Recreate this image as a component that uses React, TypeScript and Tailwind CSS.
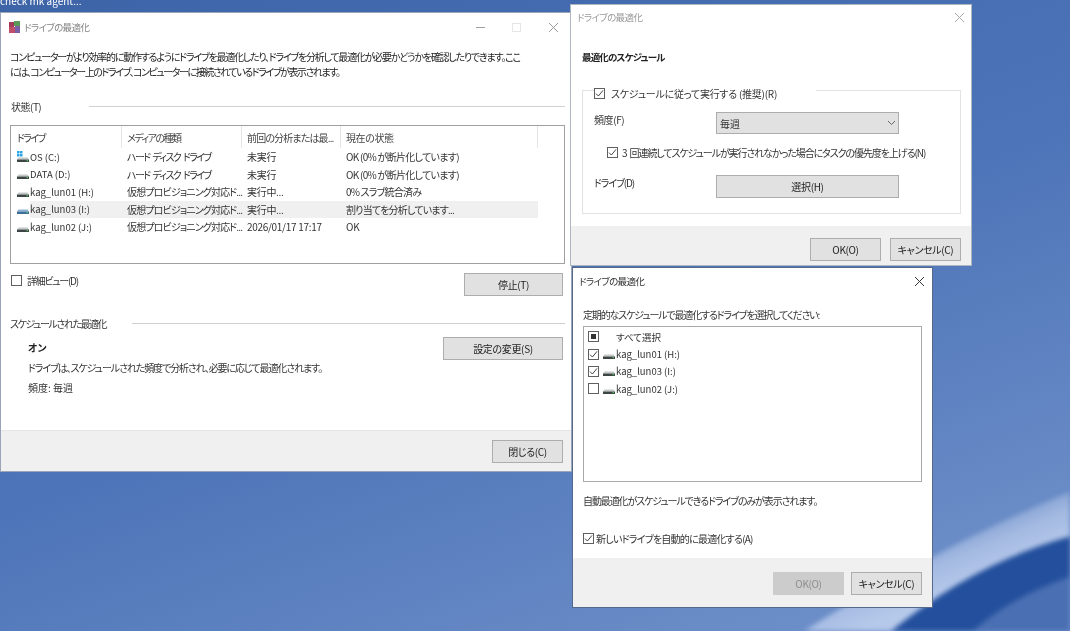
import React from "react";

const Drive = ({ blue = false, flag = false }: { blue?: boolean; flag?: boolean }) => (
  <svg width="14" height="12" viewBox="0 0 14 12" className="shrink-0">
    {flag && (
      <g fill="#2aa5e8">
        <rect x="1" y="0" width="2.5" height="2.5" />
        <rect x="4" y="0" width="2.5" height="2.5" />
        <rect x="1" y="3" width="2.5" height="2.5" />
        <rect x="4" y="3" width="2.5" height="2.5" />
      </g>
    )}
    <path d="M2.5 6.5H11.5L13 8.5H1Z" fill={blue ? "#8db4d8" : "#c4c8c8"} />
    <rect x="1" y="8.5" width="12" height="2.5" fill={blue ? "#3f6f98" : "#3d4444"} />
    <rect x="10.5" y="9.2" width="1.5" height="1" fill="#5cd05c" />
  </svg>
);

const Check = ({ on = false, mixed = false }: { on?: boolean; mixed?: boolean }) => (
  <span className="flex h-[11px] w-[11px] shrink-0 items-center justify-center border border-[#5f5f5f] bg-white">
    {on && (
      <svg width="9" height="9" viewBox="0 0 9 9">
        <path d="M1 4.6L3.4 7L8 1.4" fill="none" stroke="#444" strokeWidth="1" />
      </svg>
    )}
    {mixed && <span className="h-[5px] w-[5px] bg-[#333]" />}
  </span>
);

const Btn = ({ w, children, disabled = false }: { w: string; children: React.ReactNode; disabled?: boolean }) => (
  <div
    className={`flex h-[23px] items-center justify-center whitespace-nowrap border text-[10px] tracking-[-0.35px] ${w} ${
      disabled ? "border-[#cccccc] bg-[#cccccc] text-[#8c8c8c]" : "border-[#adadad] bg-[#e1e1e1] text-[#222]"
    }`}
  >
    {children}
  </div>
);

const Close = ({ color }: { color: string }) => (
  <svg width="11" height="11" viewBox="0 0 11 11">
    <path d="M1 1L10 10M10 1L1 10" stroke={color} strokeWidth="1" fill="none" />
  </svg>
);

const hdd = "ハード ディスク ドライブ";
const thin = "仮想プロビジョニング対応ド...";
const rows = [
  { n: "OS (C:)", m: hdd, mc: "tracking-[-1.6px] [word-spacing:2px]", d: "未実行", s: "OK (0% が断片化しています)", sc: "tracking-[-0.7px]", flag: true },
  { n: "DATA (D:)", m: hdd, mc: "tracking-[-1.6px] [word-spacing:2px]", d: "未実行", s: "OK (0% が断片化しています)", sc: "tracking-[-0.7px]" },
  { n: "kag_lun01 (H:)", m: thin, mc: "tracking-[-0.85px]", d: "実行中...", s: "0% スラブ統合済み", sc: "tracking-[-0.8px]" },
  { n: "kag_lun03 (I:)", m: thin, mc: "tracking-[-0.85px]", d: "実行中...", s: "割り当てを分析しています...", sc: "tracking-[-0.8px]", sel: true },
  { n: "kag_lun02 (J:)", m: thin, mc: "tracking-[-0.85px]", d: "2026/01/17 17:17", s: "OK", sc: "tracking-[-0.2px]" },
];

const MainWindow = () => (
  <div className="absolute left-0 top-[12px] z-10 flex h-[460px] w-[572px] flex-col border border-[#9aa5b8] bg-white">
    <div className="flex h-[27px] shrink-0 items-center pl-[7px] pr-[12px] pt-[1px]">
      <svg width="13" height="13" viewBox="0 0 13 13" className="shrink-0">
        <rect x="1" y="1" width="5" height="5" fill="#a33a5a" />
        <rect x="6" y="0" width="6" height="5" fill="#5a9a58" />
        <rect x="1" y="6" width="6" height="6" fill="#c0506a" />
        <rect x="7" y="5" width="5" height="7" fill="#7a5fa8" />
      </svg>
      <span className="ml-[3px] text-[9.5px] tracking-[-0.6px] text-[#858585]">ドライブの最適化</span>
      <div className="ml-auto flex items-center">
        <div className="h-px w-[9px] bg-[#a0a0a0]" />
        <div className="ml-[27px] h-[9px] w-[9px] border border-[#e6e6e6]" />
        <div className="ml-[27px] flex"><Close color="#9a9a9a" /></div>
      </div>
    </div>
    <div className="mt-[9px] whitespace-nowrap pl-[9px] text-[10px] leading-[15px] text-[#222]">
      <div className="tracking-[-1.23px]">コンピューターがより効率的に動作するようにドライブを最適化したり、ドライブを分析して最適化が必要かどうかを確認したりできます。ここ</div>
      <div className="tracking-[-1.45px]">には、コンピューター上のドライブ、コンピューターに接続されているドライブが表示されます。</div>
    </div>
    <div className="mt-[20px] flex h-[15px] items-center pl-[10px] pr-[6px] text-[10px] tracking-[-0.5px] text-[#333]">
      <span className="w-[78px]">状態(T)</span>
      <div className="h-px flex-1 bg-[#d0d0d0]" />
    </div>
    <div className="ml-[9px] mt-[11px] flex h-[139px] w-[555px] flex-col border border-[#a0a0a0] pr-[26px] text-[10px] text-[#333]">
      <div className="flex h-[22px] shrink-0 items-center whitespace-nowrap text-[#444]">
        <div className="flex h-full w-[111px] items-center border-r border-[#e5e5e5] pl-[6px] tracking-[-1.6px]">ドライブ</div>
        <div className="flex h-full w-[120px] items-center border-r border-[#e5e5e5] pl-[5px] tracking-[-1.5px]">メディアの種類</div>
        <div className="flex h-full w-[99px] items-center border-r border-[#e5e5e5] pl-[5px] tracking-[-0.85px]">前回の分析または最...</div>
        <div className="flex h-full flex-1 items-center border-r border-[#e5e5e5] pl-[5px] tracking-[-0.4px]">現在の状態</div>
      </div>
      <div>
        {rows.map((r) => (
          <div key={r.n} className="flex h-[17.5px] items-center whitespace-nowrap">
            <div className="w-[19px] shrink-0 pl-[5px]">
              <Drive flag={r.flag} blue={r.sel} />
            </div>
            <div className={`flex h-full flex-1 items-center ${r.sel ? "bg-[#f0f0f0]" : ""}`}>
              <div className="w-[92px] text-[9.5px]">{r.n}</div>
              <div className={`w-[120px] pl-[5px] ${r.mc}`}>{r.m}</div>
              <div className="w-[99px] pl-[5px] tracking-[-0.3px]">{r.d}</div>
              <div className={`pl-[5px] ${r.sc}`}>{r.s}</div>
            </div>
          </div>
        ))}
      </div>
    </div>
    <div className="ml-[10px] mr-[8px] mt-[9px] flex items-start justify-between">
      <div className="flex items-center gap-[5px] text-[10px] text-[#333]">
        <Check />
        <span className="tracking-[-1.3px]">詳細ビュー(D)</span>
      </div>
      <Btn w="w-[99px]">停止(T)</Btn>
    </div>
    <div className="mt-[20px] flex h-[15px] items-center pl-[9px] pr-[6px] text-[10px] text-[#333]">
      <span className="w-[122px] tracking-[-1.45px]">スケジュールされた最適化</span>
      <div className="h-px flex-1 bg-[#d0d0d0]" />
    </div>
    <div className="ml-[27px] mr-[8px] mt-[6px] flex justify-between">
      <div className="mt-[1px] whitespace-nowrap text-[10px] text-[#333]">
        <div className="h-[20px] font-bold leading-[20px] text-[#222]">オン</div>
        <div className="h-[20px] leading-[20px] tracking-[-1.1px]">ドライブは、スケジュールされた頻度で分析され、必要に応じて最適化されます。</div>
        <div className="h-[20px] leading-[20px]">頻度: 毎週</div>
      </div>
      <Btn w="w-[120px]">設定の変更(S)</Btn>
    </div>
    <div className="mt-auto flex h-[41px] items-center justify-end border-t border-[#e6e6e6] bg-[#f0f0f0] pr-[8px]">
      <Btn w="w-[71px]">閉じる(C)</Btn>
    </div>
  </div>
);

const ScheduleWindow = () => (
  <div className="absolute left-[570px] top-[4px] z-20 flex h-[262px] w-[402px] flex-col border border-[#aeb6c2] bg-white">
    <div className="flex h-[25px] shrink-0 items-center pl-[6px] pr-[6px] text-[9.5px] tracking-[-0.6px] text-[#9a9a9a]">
      <span>ドライブの最適化</span>
      <span className="ml-auto flex"><Close color="#a8a8a8" /></span>
    </div>
    <div className="ml-[11px] mt-[20px] h-[15px] text-[9.5px] font-bold leading-[15px] tracking-[-0.85px] text-[#222]">最適化のスケジュール</div>
    <fieldset className="ml-[11px] mt-[18px] h-[131px] w-[379px] border border-[#e2e2e2] px-[11px] text-[10px] text-[#333]">
      <legend className="relative top-[3px] flex h-[14px] w-[222px] items-center gap-[6px] bg-white">
        <Check on />
        <span className="whitespace-nowrap tracking-[-0.25px]">スケジュールに従って実行する (推奨)(R)</span>
      </legend>
      <div className="mt-[15px] flex h-[22px] items-center">
        <span className="-mt-[8px] w-[122px] tracking-[-0.4px]">頻度(F)</span>
        <div className="flex h-[22px] w-[183px] items-center justify-between border border-[#adadad] bg-[#e1e1e1] pl-[3px] pr-[2px] text-[#333]">
          <span>毎週</span>
          <svg width="9" height="6" viewBox="0 0 9 6"><path d="M1 1L4.5 4.5L8 1" fill="none" stroke="#666" /></svg>
        </div>
      </div>
      <div className="ml-[13px] mt-[12px] flex h-[12px] items-center gap-[4px]">
        <Check on />
        <span className="whitespace-nowrap tracking-[-1.1px] [word-spacing:2px]">3 回連続してスケジュールが実行されなかった場合にタスクの優先度を上げる(N)</span>
      </div>
      <div className="mt-[17px] flex h-[23px] items-center">
        <span className="-mt-[9px] w-[122px] tracking-[-1.1px]">ドライブ(D)</span>
        <Btn w="w-[183px]">選択(H)</Btn>
      </div>
    </fieldset>
    <div className="mt-auto flex h-[39px] items-start justify-end gap-[9px] bg-[#f0f0f0] pr-[10px] pt-[12px]">
      <Btn w="w-[71px]">OK(O)</Btn>
      <Btn w="w-[71px]">キャンセル(C)</Btn>
    </div>
  </div>
);

const picks = [
  { t: "すべて選択", mixed: true, icon: false },
  { t: "kag_lun01 (H:)", on: true, icon: true },
  { t: "kag_lun03 (I:)", on: true, icon: true },
  { t: "kag_lun02 (J:)", icon: true },
];

const PickWindow = () => (
  <div className="absolute left-[572px] top-[267px] z-30 flex h-[341px] w-[361px] flex-col border border-[#56698a] bg-white">
    <div className="flex h-[27px] shrink-0 items-center pl-[6px] pr-[7px] text-[9.5px] tracking-[-0.6px] text-[#333]">
      <span>ドライブの最適化</span>
      <span className="ml-auto flex"><Close color="#333" /></span>
    </div>
    <div className="ml-[10px] mt-[12px] h-[15px] whitespace-nowrap text-[10px] leading-[15px] tracking-[-1.15px] text-[#333]">定期的なスケジュールで最適化するドライブを選択してください:</div>
    <div className="ml-[10px] mt-[4px] h-[156px] w-[339px] border border-[#a9a9a9] pl-[4px] pt-[1px] text-[9.5px] text-[#333]">
      {picks.map((p) => (
        <div key={p.t} className="flex h-[17.4px] items-center">
          <Check on={p.on} mixed={p.mixed} />
          <span className="ml-[3px] flex w-[14px] justify-center">{p.icon && <Drive />}</span>
          <span>{p.t}</span>
        </div>
      ))}
    </div>
    <div className="ml-[10px] mt-[11px] h-[15px] whitespace-nowrap text-[10px] leading-[15px] tracking-[-1.1px] text-[#333]">自動最適化がスケジュールできるドライブのみが表示されます。</div>
    <div className="ml-[10px] mt-[23px] flex h-[14px] items-center gap-[2px] text-[10px] text-[#333]">
      <Check on />
      <span className="whitespace-nowrap tracking-[-0.75px]">新しいドライブを自動的に最適化する(A)</span>
    </div>
    <div className="mt-auto flex h-[49px] items-start justify-end gap-[7px] bg-[#f0f0f0] pr-[10px] pt-[14px]">
      <Btn w="w-[71px]" disabled>OK(O)</Btn>
      <Btn w="w-[71px]">キャンセル(C)</Btn>
    </div>
  </div>
);

export default function App() {
  return (
    <div className="relative h-[631px] w-[1070px] overflow-hidden bg-[linear-gradient(160deg,#3e64a8_0%,#4d74b8_50%,#6c8ec8_90%)] text-[10px] [font-family:'Noto_Sans_CJK_JP','Noto_Sans',sans-serif] [font-feature-settings:'palt'] blur-[0.35px]">
      <svg className="absolute inset-0 blur-[2.5px]" width="1070" height="631" viewBox="0 0 1070 631">
        <defs>
          <linearGradient id="band" gradientUnits="userSpaceOnUse" x1="930" y1="530" x2="955" y2="590">
            <stop offset="0" stopColor="#aec2e6" stopOpacity="0.1" />
            <stop offset="0.55" stopColor="#aec2e6" stopOpacity="0.85" />
            <stop offset="1" stopColor="#b6c9ea" />
          </linearGradient>
        </defs>
        <path d="M1075 575C1030 590 990 612 965 640H1075Z" fill="#4a6fb2" />
        <path d="M1075 535C1000 555 940 590 880 640H965C990 612 1030 590 1075 575Z" fill="#234f9c" />
        <path d="M1075 490C1000 520 900 570 790 640H880C940 590 1000 555 1075 535Z" fill="url(#band)" />
      </svg>
      <div className="absolute left-0 top-[-5px] text-[10px] leading-[12px] text-white">check mk agent...</div>
      <MainWindow />
      <ScheduleWindow />
      <PickWindow />
    </div>
  );
}
